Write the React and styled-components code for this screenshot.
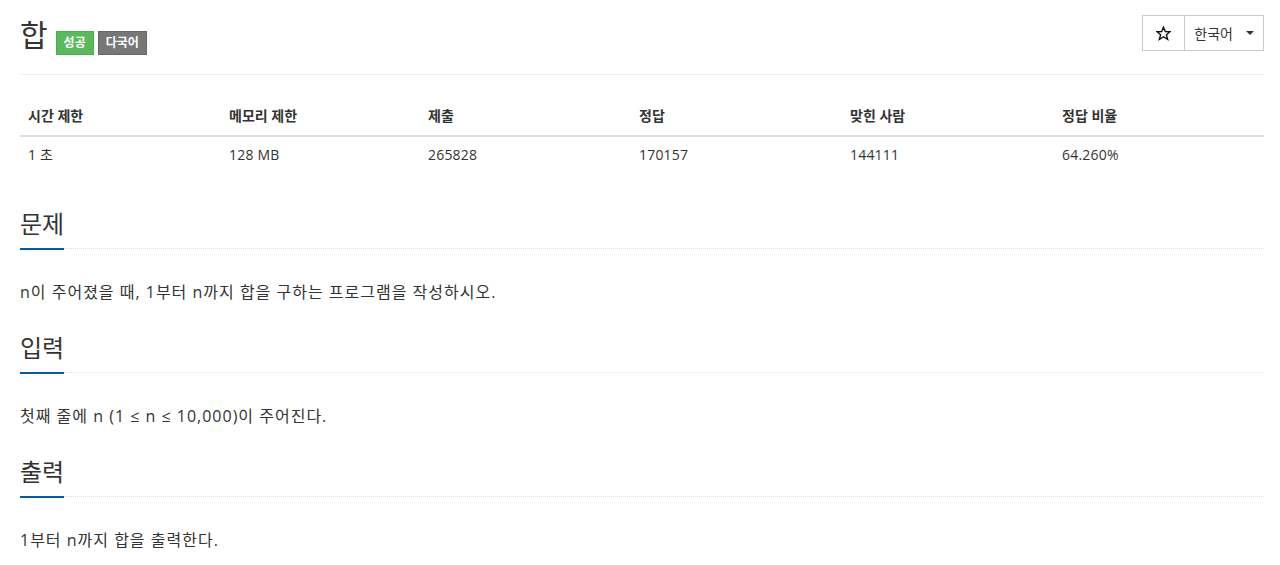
import React from "react";
import styled, { createGlobalStyle } from "styled-components";

const GlobalStyle = createGlobalStyle`
  body {
    margin: 0;
    background: #fff;
    color: #333;
    font-family: "Open Sans", "Noto Sans CJK KR", sans-serif;
  }
`;

const Page = styled.div`
  padding: 15px 16px 0 20px;
`;

const Header = styled.div`
  display: flex;
  justify-content: space-between;
  align-items: flex-start;
  padding-bottom: 19px;
  border-bottom: 1px solid #eee;
`;

const TitleGroup = styled.div`
  display: flex;
  align-items: flex-end;
  gap: 4px;
`;

const Title = styled.h1`
  margin: 0 4px 0 0;
  font-size: 30px;
  line-height: 40px;
  font-weight: 400;
  color: #333;
`;

const Badge = styled.span`
  display: inline-block;
  height: 24px;
  box-sizing: border-box;
  padding: 0 7px;
  font-size: 12px;
  line-height: 22px;
  font-weight: 700;
  color: #fff;
  background: ${(p) => (p.$tone === "green" ? "#5cb85c" : "#777")};
  border: 1px solid ${(p) => (p.$tone === "green" ? "#4cae4c" : "#666")};
`;

const ButtonGroup = styled.div`
  display: flex;
`;

const Btn = styled.button`
  display: flex;
  align-items: center;
  gap: 13px;
  height: 36px;
  box-sizing: border-box;
  padding: 0 ${(p) => (p.$narrow ? "13px" : "9px")};
  background: #fff;
  border: 1px solid #ccc;
  margin-left: -1px;
  font-family: inherit;
  font-size: 14px;
  color: #333;
`;

const Caret = styled.span`
  width: 0;
  height: 0;
  border-left: 4px solid transparent;
  border-right: 4px solid transparent;
  border-top: 4px solid #333;
`;

const Table = styled.table`
  width: 100%;
  margin-top: 23px;
  border-collapse: collapse;
  table-layout: fixed;
  font-size: 14px;
`;

const Th = styled.th`
  text-align: left;
  font-weight: 700;
  padding: 8px 8px 9px;
  line-height: 20px;
  border-bottom: 2px solid #ddd;
`;

const Td = styled.td`
  padding: 8px;
  line-height: 20px;
  letter-spacing: 0.2px;
`;

const Section = styled.section`
  margin-top: ${(p) => (p.$first ? "36px" : "29px")};
`;

const Headline = styled.h2`
  display: flex;
  align-items: flex-end;
  margin: 0;
  font-size: 24px;
  line-height: 30px;
  font-weight: 400;
  color: #333;
`;

const HeadlineText = styled.span`
  padding-bottom: 9px;
  border-bottom: 2px solid #0b5a9e;
`;

const HeadlineRule = styled.span`
  flex: 1;
  margin-bottom: 1px;
  border-bottom: 1px dotted #ddd;
`;

const Paragraph = styled.p`
  margin: 30px 0 0;
  font-size: 16px;
  line-height: 24px;
  letter-spacing: 1px;
`;

function StarIcon() {
  return (
    <svg width="15" height="15" viewBox="0 0 24 24" fill="none" stroke="#111" strokeWidth="2.2" strokeLinejoin="miter">
      <polygon points="12,2 14.9,9 22.5,9.2 16.6,14 18.7,21.5 12,17.2 5.3,21.5 7.4,14 1.5,9.2 9.1,9" />
    </svg>
  );
}

const columns = [
  { label: "시간 제한", value: "1 초", width: 201 },
  { label: "메모리 제한", value: "128 MB", width: 199 },
  { label: "제출", value: "265828", width: 211 },
  { label: "정답", value: "170157", width: 211 },
  { label: "맞힌 사람", value: "144111", width: 212 },
  { label: "정답 비율", value: "64.260%" },
];

const sections = [
  { title: "문제", body: "n이 주어졌을 때, 1부터 n까지 합을 구하는 프로그램을 작성하시오." },
  { title: "입력", body: "첫째 줄에 n (1 ≤ n ≤ 10,000)이 주어진다." },
  { title: "출력", body: "1부터 n까지 합을 출력한다." },
];

export default function App() {
  return (
    <Page>
      <GlobalStyle />
      <Header>
        <TitleGroup>
          <Title>합</Title>
          <Badge $tone="green">성공</Badge>
          <Badge>다국어</Badge>
        </TitleGroup>
        <ButtonGroup>
          <Btn $narrow aria-label="즐겨찾기">
            <StarIcon />
          </Btn>
          <Btn>
            한국어
            <Caret />
          </Btn>
        </ButtonGroup>
      </Header>

      <Table>
        <colgroup>
          {columns.map((c) => (
            <col key={c.label} style={c.width ? { width: c.width } : undefined} />
          ))}
        </colgroup>
        <thead>
          <tr>
            {columns.map((c) => (
              <Th key={c.label}>{c.label}</Th>
            ))}
          </tr>
        </thead>
        <tbody>
          <tr>
            {columns.map((c) => (
              <Td key={c.label}>{c.value}</Td>
            ))}
          </tr>
        </tbody>
      </Table>

      {sections.map((s, i) => (
        <Section key={s.title} $first={i === 0}>
          <Headline>
            <HeadlineText>{s.title}</HeadlineText>
            <HeadlineRule />
          </Headline>
          <Paragraph>{s.body}</Paragraph>
        </Section>
      ))}
    </Page>
  );
}
